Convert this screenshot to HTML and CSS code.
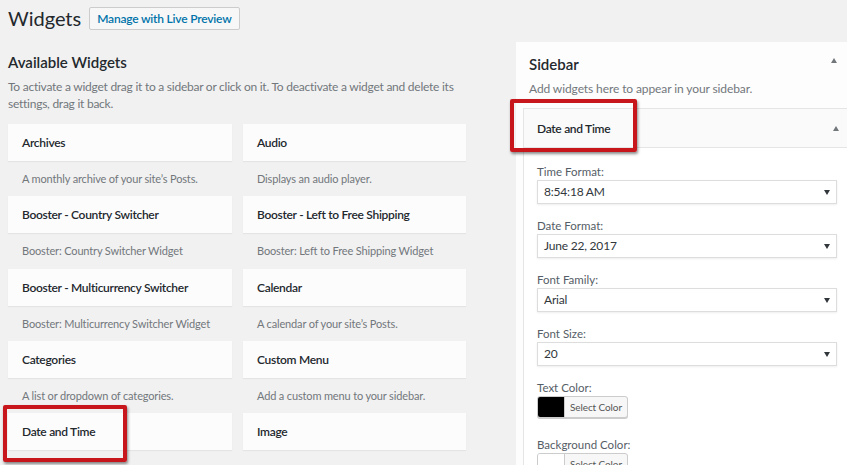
FILE: index.html
```html
<!DOCTYPE html>
<html lang="en">
<head>
  <meta charset="UTF-8" />
  <title>Widgets</title>
  <link rel="stylesheet" href="styles.css">
</head>
<body>
  <div class="wrap">
    <div class="page-head">
      <h1>Widgets</h1>
      <a class="btn-preview" href="#">Manage with Live Preview</a>
    </div>

    <div class="columns">
      <div class="available">
        <h2>Available Widgets</h2>
        <p class="intro">To activate a widget drag it to a sidebar or click on it. To deactivate a widget and delete its settings, drag it back.</p>

        <div class="widget-grid">
          <div class="widget-item">
            <div class="widget-card">Archives</div>
            <div class="widget-desc">A monthly archive of your site’s Posts.</div>
          </div>
          <div class="widget-item">
            <div class="widget-card">Audio</div>
            <div class="widget-desc">Displays an audio player.</div>
          </div>
          <div class="widget-item">
            <div class="widget-card">Booster - Country Switcher</div>
            <div class="widget-desc">Booster: Country Switcher Widget</div>
          </div>
          <div class="widget-item">
            <div class="widget-card">Booster - Left to Free Shipping</div>
            <div class="widget-desc">Booster: Left to Free Shipping Widget</div>
          </div>
          <div class="widget-item">
            <div class="widget-card">Booster - Multicurrency Switcher</div>
            <div class="widget-desc">Booster: Multicurrency Switcher Widget</div>
          </div>
          <div class="widget-item">
            <div class="widget-card">Calendar</div>
            <div class="widget-desc">A calendar of your site’s Posts.</div>
          </div>
          <div class="widget-item">
            <div class="widget-card">Categories</div>
            <div class="widget-desc">A list or dropdown of categories.</div>
          </div>
          <div class="widget-item">
            <div class="widget-card">Custom Menu</div>
            <div class="widget-desc">Add a custom menu to your sidebar.</div>
          </div>
          <div class="widget-item">
            <div class="widget-card">Date and Time
              <span class="mark mark-left"></span>
            </div>
          </div>
          <div class="widget-item">
            <div class="widget-card">Image</div>
          </div>
        </div>
      </div>

      <div class="sidebar-panel">
        <div class="panel-head">
          <h3>Sidebar</h3>
          <span class="arrow-up"></span>
        </div>
        <p class="panel-desc">Add widgets here to appear in your sidebar.</p>

        <div class="open-widget">
          <div class="open-widget-head">
            <span>Date and Time</span>
            <span class="arrow-up"></span>
            <span class="mark mark-right"></span>
          </div>
          <div class="open-widget-body">
            <div class="field">
              <label>Time Format:</label>
              <div class="fake-select">8:54:18 AM<span class="arrow-down"></span></div>
            </div>
            <div class="field">
              <label>Date Format:</label>
              <div class="fake-select">June 22, 2017<span class="arrow-down"></span></div>
            </div>
            <div class="field">
              <label>Font Family:</label>
              <div class="fake-select">Arial<span class="arrow-down"></span></div>
            </div>
            <div class="field">
              <label>Font Size:</label>
              <div class="fake-select">20<span class="arrow-down"></span></div>
            </div>
            <div class="field color-field">
              <label>Text Color:</label>
              <div class="color-btn"><span class="swatch swatch-black"></span><span class="color-text">Select Color</span></div>
            </div>
            <div class="field color-field">
              <label>Background Color:</label>
              <div class="color-btn"><span class="swatch"></span><span class="color-text">Select Color</span></div>
            </div>
          </div>
        </div>
      </div>
    </div>
  </div>
</body>
</html>
```

FILE: styles.css
```css
html, body {
  margin: 0;
  padding: 0;
  background: #f1f1f1;
  font-family: Lato, "Noto Sans", sans-serif;
  color: #23282d;
  overflow: hidden;
}
.wrap {
  padding-left: 8px;
}
.page-head {
  display: flex;
  align-items: center;
  height: 36px;
  margin-bottom: 6px;
}
.page-head h1 {
  margin: 0 8px 0 0;
  font-size: 20px;
  font-weight: 400;
  line-height: 28px;
  color: #23282d;
}
.btn-preview {
  display: inline-block;
  height: 21px;
  line-height: 21px;
  padding: 0 7px;
  border: 1px solid #ccc;
  border-radius: 2px;
  background: #f7f7f7;
  color: #0073aa;
  font-size: 12px;
  font-weight: 600;
  letter-spacing: -0.2px;
  text-decoration: none;
}
.columns {
  display: flex;
  gap: 50px;
}
.available {
  width: 458px;
}
.available h2 {
  margin: 8px 0 0;
  font-size: 15px;
  font-weight: 600;
  line-height: 24px;
}
.intro {
  margin: 4px 0 0;
  font-size: 12px;
  letter-spacing: -0.25px;
  line-height: 17px;
  color: #72777c;
}
.widget-grid {
  display: grid;
  grid-template-columns: 224px 223px;
  column-gap: 11px;
  margin-top: 12px;
}
.widget-card {
  position: relative;
  height: 37px;
  line-height: 37px;
  padding-left: 14px;
  background: #fcfcfd;
  box-shadow: 0 1px 1px rgba(0, 0, 0, 0.05);
  font-size: 12px;
  font-weight: 600;
  letter-spacing: -0.3px;
  color: #23282d;
}
.widget-desc {
  height: 35.25px;
  line-height: 35px;
  padding-left: 14px;
  font-size: 11px;
  letter-spacing: -0.15px;
  color: #72777c;
}
.mark {
  position: absolute;
  border: 4px solid #c8161d;
  border-radius: 2px;
  box-shadow: 1px 2px 3px rgba(0, 0, 0, 0.45);
  box-sizing: border-box;
}
.mark-left {
  left: -5px;
  top: -8px;
  width: 124px;
  height: 57px;
}
.mark-right {
  left: -14px;
  top: -10px;
  width: 127px;
  height: 53px;
}
.sidebar-panel {
  width: 340px;
  height: 440px;
  background: #fdfdfd;
  padding-left: 7px;
  box-sizing: border-box;
}
.panel-head {
  display: flex;
  justify-content: space-between;
  align-items: center;
  padding: 10px 0 0 6px;
  width: 308px;
}
.panel-head h3 {
  margin: 0;
  font-size: 15px;
  font-weight: 600;
  line-height: 24px;
}
.panel-head .arrow-up {
  margin-top: -8px;
}
.panel-desc {
  margin: 4px 0 0 6px;
  font-size: 12px;
  letter-spacing: -0.1px;
  line-height: 17px;
  color: #72777c;
}
.arrow-up {
  width: 0;
  height: 0;
  border-left: 3px solid transparent;
  border-right: 3px solid transparent;
  border-bottom: 5px solid #72777c;
}
.arrow-down {
  position: absolute;
  right: 6px;
  top: 9px;
  width: 0;
  height: 0;
  border-left: 3px solid transparent;
  border-right: 3px solid transparent;
  border-top: 5px solid #32373c;
}
.open-widget {
  margin-top: 11px;
  width: 340px;
  border: 1px solid #e5e5e5;
  border-right: none;
}
.open-widget-head {
  position: relative;
  display: flex;
  justify-content: space-between;
  align-items: center;
  height: 38px;
  padding: 0 25px 0 13px;
  width: 302px;
  background: #fafafa;
  border-bottom: 1px solid #e5e5e5;
  font-size: 12px;
  font-weight: 600;
  letter-spacing: -0.3px;
}
.open-widget-body {
  padding: 15px 0 0 13px;
  background: #fff;
  height: 320px;
}
.field {
  margin-bottom: 13px;
}
.field label {
  display: block;
  font-size: 11.5px;
  line-height: 17px;
  color: #555d66;
}
.fake-select {
  position: relative;
  height: 24px;
  line-height: 22px;
  padding-left: 6px;
  box-sizing: border-box;
  width: 300px;
  border: 1px solid #ddd;
  box-shadow: 0 1px 2px rgba(0, 0, 0, 0.07);
  background: #fff;
  font-size: 12px;
  letter-spacing: -0.2px;
  color: #32373c;
}
.color-field {
  margin-bottom: 18px;
}
.color-btn {
  display: flex;
  height: 20px;
  width: 89px;
  border: 1px solid #ccc;
  border-radius: 3px;
  background: #f7f7f7;
  box-shadow: 0 1px 0 #ccc;
  overflow: hidden;
}
.swatch {
  width: 26px;
  background: #fff;
  border-right: 1px solid #ccc;
}
.swatch-black {
  background: #000;
}
.color-text {
  flex: 1;
  text-align: center;
  line-height: 20px;
  font-size: 10px;
  letter-spacing: -0.1px;
  color: #555;
}
```
